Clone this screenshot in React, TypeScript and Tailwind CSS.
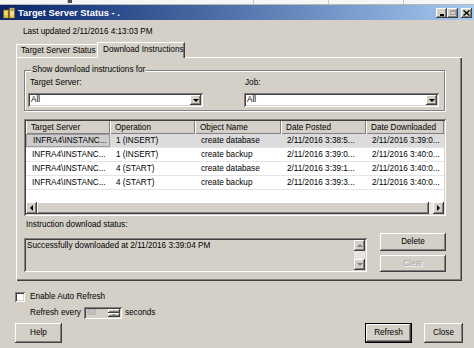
import React from "react";

const raised =
  "shadow-[inset_-1px_-1px_0_#404040,inset_1px_1px_0_#fff,inset_-2px_-2px_0_#808080]";
const sunken =
  "shadow-[inset_1px_1px_0_#808080,inset_-1px_-1px_0_#fff,inset_2px_2px_0_#404040,inset_-2px_-2px_0_#d4d0c8]";

function Tri({ dir = "down", color = "#000" }: { dir?: "down" | "up" | "left" | "right"; color?: string }) {
  const pts: Record<string, string> = {
    down: "0,0 6,0 3,3",
    up: "0,3 6,3 3,0",
    left: "3,0 3,6 0,3",
    right: "0,0 0,6 3,3",
  };
  const vertical = dir === "down" || dir === "up";
  return (
    <svg width={vertical ? 6 : 3} height={vertical ? 3 : 6} viewBox={vertical ? "0 0 6 3" : "0 0 3 6"}>
      <polygon points={pts[dir]} fill={color} />
    </svg>
  );
}

function Combo({ className }: { className: string }) {
  return (
    <div className={`${className} h-[14px] bg-white flex p-[2px] ${sunken}`}>
      <div className="flex-1 pl-[1px] leading-[10px] flex items-center">All</div>
      <div className={`w-[11px] h-full bg-[#d4d0c8] flex items-center justify-center ${raised}`}>
        <Tri />
      </div>
    </div>
  );
}

const cols = ["w-[84px]", "w-[85px]", "w-[86px]", "w-[85px]", "flex-1"];
const headers = ["Target Server", "Operation", "Object Name", "Date Posted", "Date Downloaded"];
const rows = [
  ["INFRA4\\INSTANC...", "1 (INSERT)", "create database", "2/11/2016 3:38:5...", "2/11/2016 3:39:0..."],
  ["INFRA4\\INSTANC...", "1 (INSERT)", "create backup", "2/11/2016 3:39:0...", "2/11/2016 3:40:0..."],
  ["INFRA4\\INSTANC...", "4 (START)", "create database", "2/11/2016 3:39:1...", "2/11/2016 3:40:0..."],
  ["INFRA4\\INSTANC...", "4 (START)", "create backup", "2/11/2016 3:39:3...", "2/11/2016 3:40:0..."],
];

function TitleIcon() {
  return (
    <svg width="12" height="12" viewBox="0 0 12 12">
      <rect x="0.5" y="3" width="5" height="8" fill="#e8c040" stroke="#806010" strokeWidth="0.6" />
      <rect x="1.5" y="4.5" width="3" height="1" fill="#fff4b0" />
      <rect x="1.5" y="6.5" width="3" height="1" fill="#fff4b0" />
      <rect x="6.5" y="1" width="5" height="10" fill="#f0d060" stroke="#806010" strokeWidth="0.6" />
      <rect x="7.5" y="2.5" width="3" height="1" fill="#3060c0" />
      <rect x="7.5" y="4.5" width="3" height="1" fill="#fff4b0" />
      <rect x="7.5" y="6.5" width="3" height="1" fill="#fff4b0" />
    </svg>
  );
}

export default function App() {
  return (
    <div className="w-[474px] h-[348px] overflow-hidden bg-[#d4d0c8] text-black text-[8.2px] font-['Liberation_Sans',Arial,sans-serif]">
      {/* bit of the window behind */}
      <div className="h-[5px] bg-[#f6f6f6] flex border-b border-[#b8b8b8]">
        <div className="w-[68px] border-r border-[#c8c8c8]" />
        <div className="w-[4px] bg-[#505050] h-[3px]" />
        <div className="w-[182px] border-r border-[#c8c8c8]" />
        <div className="w-[75px] border-r border-[#c8c8c8]" />
        <div className="w-[75px] border-r border-[#c8c8c8]" />
      </div>

      {/* title bar */}
      <div className="h-[15px] flex items-center bg-gradient-to-r from-[#0a246a] to-[#a6caf0] pl-[3px] pr-[2px]">
        <TitleIcon />
        <div className="ml-[3px] text-white font-bold text-[9.4px] leading-[11px]">Target Server Status - .</div>
        <div className="ml-auto flex items-center">
          <div className={`w-[11px] h-[10px] bg-[#d4d0c8] flex items-end justify-center pb-[2px] ${raised}`}>
            <div className="w-[4px] h-[2px] bg-black" />
          </div>
          <div className={`w-[11px] h-[10px] bg-[#d4d0c8] flex items-center justify-center ${raised}`}>
            <div className="w-[6px] h-[5px] border border-[#a0a0a0] border-t-2" />
          </div>
          <div className={`ml-[3px] w-[11px] h-[10px] bg-[#d4d0c8] flex items-center justify-center ${raised}`}>
            <svg width="7" height="6" viewBox="0 0 7 6">
              <path d="M0.5 0.5 L6.5 5.5 M6.5 0.5 L0.5 5.5" stroke="#000" strokeWidth="1.4" />
            </svg>
          </div>
        </div>
      </div>

      {/* body */}
      <div className="pl-[16px] pr-[12px]">
        <div className="h-[22px] pt-[7px] pl-[7px] leading-[10px]">Last updated 2/11/2016 4:13:03 PM</div>

        {/* tabs */}
        <div className="h-[15px] flex items-end relative z-10">
          <div className="h-[13px] w-[81px] border-t border-l border-white flex items-center pl-[4px] leading-[10px]">
            Target Server Status
          </div>
          <div className="h-[16px] -mb-[1px] w-[88px] bg-[#d4d0c8] border-t border-l border-white border-r border-r-[#404040] flex items-center pl-[5px] pb-[1px] leading-[10px] shadow-[inset_-1px_0_0_#808080]">
            Download Instructions
          </div>
        </div>

        {/* panel */}
        <div className="h-[224px] w-[446px] border-t border-l border-white shadow-[inset_-1px_-1px_0_#404040,inset_-2px_-2px_0_#808080]">
          {/* group box */}
          <div className="ml-[7px] mt-[12px] w-[421px] h-[41px] border border-[#808080] shadow-[inset_1px_1px_0_#fff,1px_1px_0_#fff]">
            <div className="-mt-[6px] ml-[6px] px-[1px] bg-[#d4d0c8] w-fit leading-[10px]">Show download instructions for</div>
            <div className="flex pl-[3px] mt-[3px]">
              <div className="w-[175px]">
                <div className="leading-[10px] pl-[2px]">Target Server:</div>
                <Combo className="mt-[5px] w-[175px]" />
              </div>
              <div className="ml-[41px] w-[195px]">
                <div className="leading-[10px] pl-[1px]">Job:</div>
                <Combo className="mt-[5px] w-[195px]" />
              </div>
            </div>
          </div>

          {/* list */}
          <div className={`ml-[7px] mt-[8px] w-[422px] h-[97px] bg-white p-[2px] flex flex-col ${sunken}`}>
            <div className="h-[13px] flex bg-[#d4d0c8]">
              {headers.map((h, i) => (
                <div
                  key={h}
                  className={`${cols[i]} h-full flex items-center pl-[4px] leading-[10px] whitespace-nowrap overflow-hidden border-l border-white shadow-[inset_-1px_-1px_0_#808080]`}
                >
                  {h}
                </div>
              ))}
            </div>
            {rows.map((r, ri) => (
              <div
                key={ri}
                className={`h-[14px] flex border-b border-[#e4e4e4] ${ri === 0 ? "bg-[#dcdcdc]" : "bg-white"}`}
              >
                {r.map((c, ci) => (
                  <div
                    key={ci}
                    className={`${cols[ci]} h-full flex items-center pl-[6px] leading-[10px] whitespace-nowrap overflow-hidden ${
                      ri === 0 && ci === 0 ? "bg-[#cdcdcd] border border-[#9c9c9c] pl-[5px]" : ""
                    }`}
                  >
                    {c}
                  </div>
                ))}
              </div>
            ))}
            <div className="flex-1" />
            <div className="h-[12px] flex bg-[#e8e6e2]">
              <div className={`w-[11px] h-full bg-[#d4d0c8] flex items-center justify-center ${raised}`}>
                <Tri dir="left" />
              </div>
              <div className={`w-[392px] h-full bg-[#d4d0c8] ${raised}`} />
              <div className="flex-1" />
              <div className={`w-[11px] h-full bg-[#d4d0c8] flex items-center justify-center ${raised}`}>
                <Tri dir="right" />
              </div>
            </div>
          </div>

          <div className="ml-[9px] mt-[4px] leading-[10px]">Instruction download status:</div>

          <div className="ml-[7px] mt-[3px] flex items-start">
            <div className={`mt-[5px] w-[343px] h-[34px] p-[2px] flex ${sunken}`}>
              <div className="flex-1 pl-[1px] pt-[1px] leading-[10px]">
                Successfully downloaded at 2/11/2016 3:39:04 PM
              </div>
              <div className="w-[11px] h-full flex flex-col bg-[#e8e6e2]">
                <div className={`h-[11px] bg-[#d4d0c8] flex items-center justify-center ${raised}`}>
                  <Tri dir="up" color="#808080" />
                </div>
                <div className="flex-1" />
                <div className={`h-[11px] bg-[#d4d0c8] flex items-center justify-center ${raised}`}>
                  <Tri dir="down" color="#808080" />
                </div>
              </div>
            </div>
            <div className="ml-[13px] w-[66px] flex flex-col gap-[4px]">
              <div className={`h-[18px] flex items-center justify-center leading-[10px] ${raised}`}>Delete</div>
              <div className={`h-[17px] flex items-center justify-center leading-[10px] text-[#a0a0a0] [text-shadow:1px_1px_0_#fff] ${raised}`}>
                Clear
              </div>
            </div>
          </div>
        </div>
      </div>

      {/* bottom */}
      <div className="pl-[15px] pr-[11px]">
        <div className="mt-[11px] h-[10px] flex items-center">
          <div className={`w-[10px] h-[10px] bg-white ${sunken}`} />
          <div className="ml-[5px] leading-[10px]">Enable Auto Refresh</div>
        </div>
        <div className="mt-[5px] h-[12px] flex items-center pl-[15px]">
          <div className="leading-[10px]">Refresh every</div>
          <div className={`ml-[3px] w-[38px] h-[12px] p-[2px] flex ${sunken}`}>
            <div className="flex-1 pl-[1px] leading-[8px] text-[#a0a0a0] flex items-center">60</div>
            <div className="w-[12px] h-full flex flex-col">
              <div className={`flex-1 bg-[#d4d0c8] flex items-center justify-center ${raised}`}>
                <svg width="4" height="2" viewBox="0 0 4 2">
                  <polygon points="0,2 4,2 2,0" fill="#808080" />
                </svg>
              </div>
              <div className={`flex-1 bg-[#d4d0c8] flex items-center justify-center ${raised}`}>
                <svg width="4" height="2" viewBox="0 0 4 2">
                  <polygon points="0,0 4,0 2,2" fill="#808080" />
                </svg>
              </div>
            </div>
          </div>
          <div className="ml-[3px] leading-[10px]">seconds</div>
        </div>
        <div className="mt-[4px] h-[20px] flex">
          <div className={`w-[47px] h-full flex items-center justify-center leading-[10px] ${raised}`}>Help</div>
          <div className="ml-auto w-[47px] h-full border border-black">
            <div className={`w-full h-full flex items-center justify-center leading-[10px] ${raised}`}>Refresh</div>
          </div>
          <div className={`ml-[12px] w-[39px] h-full flex items-center justify-center leading-[10px] ${raised}`}>Close</div>
        </div>
      </div>
    </div>
  );
}
